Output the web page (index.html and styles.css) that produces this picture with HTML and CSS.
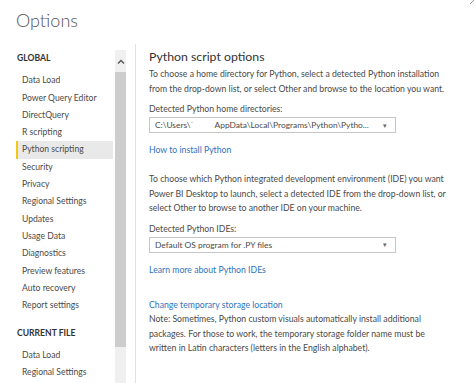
FILE: index.html
```html
<!DOCTYPE html>
<html lang="en">
<head>
    <meta charset="UTF-8">
    <meta name="viewport" content="width=device-width, initial-scale=1.0">
    <title>Options</title>
    <link rel="stylesheet" href="styles.css">
</head>
<body>
    <div class="dialog">
        <header class="dialog-header">
            <h1 class="dialog-title">Options</h1>
            <svg class="close-btn" width="8" height="8" viewBox="0 0 8 8"><path d="M0 0 L7 7 M7 0 L0 7" stroke="#999" stroke-width="1"/></svg>
        </header>

        <div class="dialog-body">
            <aside class="sidebar">
                <nav class="nav">
                    <div class="nav-group">GLOBAL</div>
                    <ul class="nav-list">
                        <li class="nav-item">Data Load</li>
                        <li class="nav-item">Power Query Editor</li>
                        <li class="nav-item">DirectQuery</li>
                        <li class="nav-item">R scripting</li>
                        <li class="nav-item active">Python scripting</li>
                        <li class="nav-item">Security</li>
                        <li class="nav-item">Privacy</li>
                        <li class="nav-item">Regional Settings</li>
                        <li class="nav-item">Updates</li>
                        <li class="nav-item">Usage Data</li>
                        <li class="nav-item">Diagnostics</li>
                        <li class="nav-item">Preview features</li>
                        <li class="nav-item">Auto recovery</li>
                        <li class="nav-item">Report settings</li>
                    </ul>
                    <div class="nav-group nav-group-second">CURRENT FILE</div>
                    <ul class="nav-list">
                        <li class="nav-item">Data Load</li>
                        <li class="nav-item">Regional Settings</li>
                    </ul>
                </nav>
                <div class="scrollbar">
                    <div class="scroll-arrow">
                        <svg width="8" height="5" viewBox="0 0 8 5"><path d="M1 4.5 L4 1.5 L7 4.5" fill="none" stroke="#555" stroke-width="1.4"/></svg>
                    </div>
                    <div class="scroll-thumb"></div>
                </div>
            </aside>

            <main class="content">
                <h2 class="section-title">Python script options</h2>
                <p class="text">To choose a home directory for Python, select a detected Python installation from the drop-down list, or select Other and browse to the location you want.</p>

                <label class="field-label">Detected Python home directories:</label>
                <div class="select">
                    <span class="select-value">C:\Users\<span class="redacted">`</span>AppData\Local\Programs\Python\Pytho...</span>
                    <span class="select-arrow">&#9662;</span>
                </div>
                <a href="#" class="link link-first">How to install Python</a>

                <p class="text text-spaced">To choose which Python integrated development environment (IDE) you want Power BI Desktop to launch, select a detected IDE from the drop-down list, or select Other to browse to another IDE on your machine.</p>

                <label class="field-label">Detected Python IDEs:</label>
                <div class="select">
                    <span class="select-value">Default OS program for .PY files</span>
                    <span class="select-arrow">&#9662;</span>
                </div>
                <a href="#" class="link link-first">Learn more about Python IDEs</a>

                <a href="#" class="link link-storage">Change temporary storage location</a>
                <p class="text">Note: Sometimes, Python custom visuals automatically install additional packages. For those to work, the temporary storage folder name must be written in Latin characters (letters in the English alphabet).</p>
            </main>
        </div>
    </div>
</body>
</html>
```

FILE: styles.css
```css
:root {
    --text: #4a4a4a;
    --heading: #333333;
    --link: #2f74bd;
    --border: #e2e2e2;
    --highlight: #e9e9e9;
    --accent: #f2c811;
}

* {
    box-sizing: border-box;
    margin: 0;
    padding: 0;
}

body {
    font-family: 'Segoe UI', Lato, 'Noto Sans', sans-serif;
    background-color: #ffffff;
    color: var(--text);
    overflow: hidden;
}

.dialog {
    width: 474px;
    height: 383px;
    display: flex;
    flex-direction: column;
}

.dialog-header {
    height: 44px;
    display: flex;
    justify-content: space-between;
    align-items: flex-start;
    padding-left: 16px;
}

.dialog-title {
    font-size: 18px;
    font-weight: 300;
    color: #555555;
    line-height: 26px;
    margin-top: 7px;
}

.close-btn {
    margin-right: -4px;
    margin-top: -3px;
}

.dialog-body {
    flex: 1;
    display: flex;
    min-height: 0;
}

/* Colonne de gauche */
.sidebar {
    width: 135px;
    display: flex;
    padding-top: 6px;
}

.nav {
    width: 113px;
    padding-left: 16px;
    margin-right: 2px;
    font-size: 8.6px;
}

.nav-group {
    font-weight: 700;
    color: var(--heading);
    line-height: 17.3px;
    padding-left: 1px;
    margin-bottom: 5px;
}

.nav-group-second {
    margin-top: 11px;
    margin-bottom: 4px;
}

.nav-list {
    list-style: none;
}

.nav-item {
    line-height: 17.3px;
    border-left: 2px solid transparent;
    padding-left: 4px;
    white-space: nowrap;
}

.nav-item.active {
    background-color: var(--highlight);
    border-left-color: var(--accent);
}

.scrollbar {
    width: 11px;
    background-color: #f0f0f0;
    display: flex;
    flex-direction: column;
}

.scroll-arrow {
    height: 22px;
    display: flex;
    align-items: center;
    justify-content: center;
}

.scroll-thumb {
    height: 275px;
    background-color: #cdcdcd;
}

/* Contenu */
.content {
    flex: 1;
    border-left: 1px solid var(--border);
    padding: 3px 0 0 13px;
    font-size: 8.7px;
    display: flex;
    flex-direction: column;
    align-items: flex-start;
}

.section-title {
    font-size: 12.3px;
    font-weight: 400;
    color: var(--heading);
    line-height: 19px;
    margin-bottom: 1px;
}

.text {
    width: 300px;
    line-height: 14.6px;
}

.text-spaced {
    margin-top: 15px;
}

.field-label {
    line-height: 14px;
    margin-top: 6px;
    margin-bottom: 1px;
}

.select {
    width: 247px;
    height: 16px;
    border: 1px solid #c6c6c6;
    display: flex;
    align-items: center;
    gap: 6px;
    padding: 0 8px 0 5px;
    color: var(--text);
    font-size: 8.4px;
}

.select-value {
    flex: 1;
    min-width: 0;
    white-space: nowrap;
    overflow: hidden;
}

.redacted {
    display: inline-block;
    width: 24px;
    color: #999999;
}

.select-arrow {
    font-size: 7px;
    color: #666666;
}

.link {
    color: var(--link);
    text-decoration: none;
    line-height: 15px;
}

.link-first {
    margin-top: 9px;
}

.link-storage {
    margin-top: 20px;
}
```
